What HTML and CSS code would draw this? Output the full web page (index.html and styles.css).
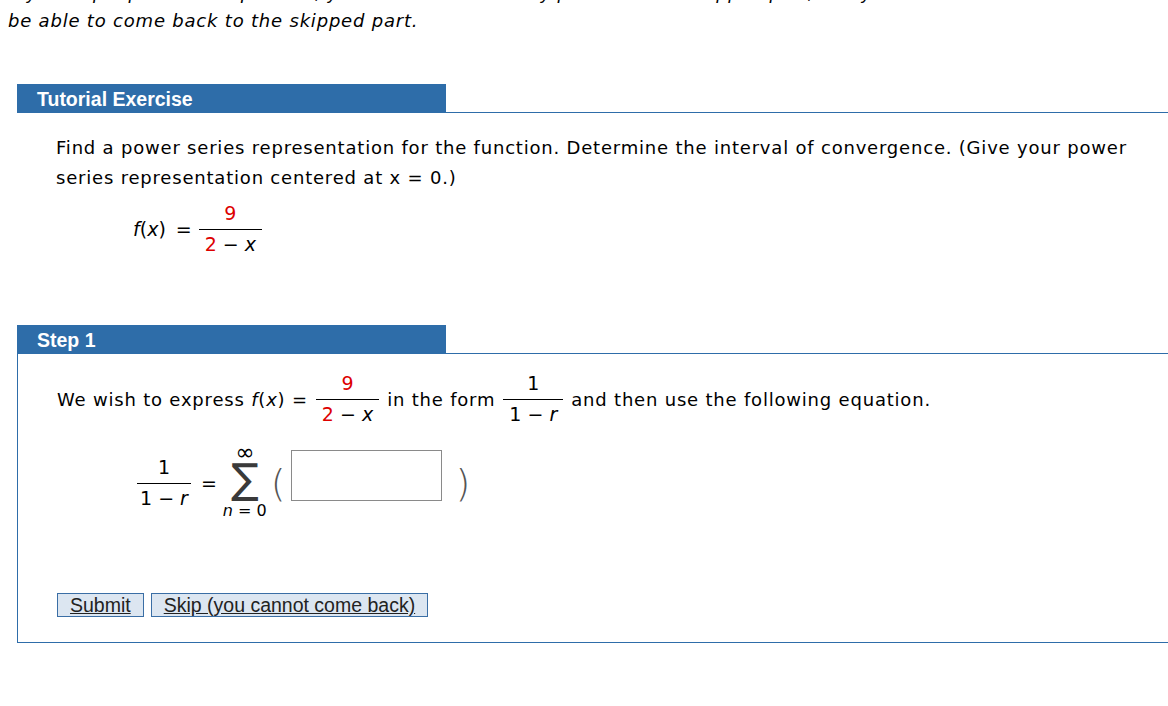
FILE: index.html
```html
<!DOCTYPE html>
<html>
<head>
<meta charset="utf-8">
<link rel="stylesheet" href="styles.css">
</head>
<body>
<div class="intro">
  <p class="clipped">If you skip a part of the question, you will not receive any points for the skipped part, and you will not</p>
  <p>be able to come back to the skipped part.</p>
</div>

<section class="tutorial">
  <div class="tab-row">
    <h2 class="tab">Tutorial Exercise</h2>
    <div class="rule"></div>
  </div>
  <div class="tut-body">
    <p class="question">Find a power series representation for the function. Determine the interval of convergence. (Give your power series representation centered at x = 0.)</p>
    <div class="eq eq-main">
      <span class="lhs"><i>f</i>(<i>x</i>)</span>
      <span class="op">=</span>
      <span class="frac wide">
        <span class="num red">9</span>
        <span class="den"><span class="red">2</span> − <i>x</i></span>
      </span>
    </div>
  </div>
</section>

<section class="step">
  <div class="tab-row">
    <h2 class="tab">Step 1</h2>
    <div class="rule"></div>
  </div>
  <div class="step-body">
    <div class="eq-line">
      <span class="txt">We wish to express <i>f</i>(<i>x</i>) =</span>
      <span class="frac wide">
        <span class="num red">9</span>
        <span class="den"><span class="red">2</span> − <i>x</i></span>
      </span>
      <span class="txt">in the form</span>
      <span class="frac wide">
        <span class="num">1</span>
        <span class="den">1 − <i>r</i></span>
      </span>
      <span class="txt">and then use the following equation.</span>
    </div>

    <div class="eq eq-sum">
      <span class="frac">
        <span class="num">1</span>
        <span class="den">1 − <i>r</i></span>
      </span>
      <span class="op">=</span>
      <span class="sigma">
        <span class="lim top">∞</span>
        <span class="sym">∑</span>
        <span class="lim bottom"><i>n</i> = 0</span>
      </span>
      <span class="paren">(</span>
      <input class="answer" type="text">
      <span class="paren">)</span>
    </div>

    <div class="buttons">
      <button class="btn">Submit</button>
      <button class="btn">Skip (you cannot come back)</button>
    </div>
  </div>
</section>
</body>
</html>
```

FILE: styles.css
```css
html, body {
  margin: 0;
  padding: 0;
  background: #ffffff;
}

body {
  font-family: "DejaVu Sans", Verdana, sans-serif;
  font-size: 18px;
  letter-spacing: 0.8px;
  color: #000000;
  width: 1168px;
  overflow: hidden;
}

p {
  margin: 0;
}

.intro {
  padding-left: 8px;
  font-style: italic;
  line-height: 28px;
  margin-top: -21px;
  white-space: nowrap;
  overflow: hidden;
}

.clipped {
  letter-spacing: 0.4px;
}

.tutorial {
  margin-top: 49px;
  margin-left: 17px;
}

.tab-row {
  display: flex;
  align-items: flex-end;
}

.tab {
  margin: 0;
  width: 429px;
  height: 29px;
  box-sizing: border-box;
  padding-left: 20px;
  background: #2e6da9;
  color: #ffffff;
  font-family: "Liberation Sans", Arial, sans-serif;
  font-weight: bold;
  font-size: 19.5px;
  letter-spacing: 0;
  line-height: 30px;
}

.rule {
  flex: 1;
  border-bottom: 1px solid #2e6da9;
}

.tut-body {
  padding: 20px 0 0 39px;
}

.question {
  line-height: 30px;
  padding-right: 20px;
}

.red {
  color: #dd0000;
}

.eq {
  display: flex;
  align-items: center;
  letter-spacing: 0;
  font-size: 19px;
}

.eq-main {
  margin-top: 9px;
  margin-left: 77px;
}

.lhs {
  margin-right: 10px;
}

.op {
  margin-right: 7px;
}

.frac {
  display: inline-flex;
  flex-direction: column;
  align-items: center;
  font-size: 19px;
  letter-spacing: 0;
  line-height: 23px;
}

.frac .num {
  align-self: stretch;
  text-align: center;
  border-bottom: 1px solid #000000;
  padding: 0 3px 4px;
}

.frac .den {
  padding: 3px 3px 0;
  white-space: nowrap;
}

.frac.wide .num,
.frac.wide .den {
  padding-left: 6px;
  padding-right: 6px;
}

.step {
  margin-top: 69px;
  margin-left: 17px;
  border-left: 1px solid #2e6da9;
  border-bottom: 1px solid #2e6da9;
}

.step .tab-row {
  margin-left: -1px;
}

.step-body {
  padding: 18px 0 25px 39px;
}

.eq-line {
  display: flex;
  align-items: center;
  gap: 8px;
}

.eq-sum {
  margin-top: 18px;
  margin-left: 80px;
}

.eq-sum .op {
  margin: 0 6px 0 10px;
}

.sigma {
  display: inline-flex;
  flex-direction: column;
  align-items: center;
  font-size: 16px;
  margin-right: 4px;
}

.sigma .lim.top {
  font-size: 23px;
  line-height: 16px;
}

.sigma .lim.bottom {
  line-height: 20px;
}

.sigma .sym {
  font-family: "DejaVu Sans", sans-serif;
  font-size: 41px;
  line-height: 36px;
  margin-top: 1px;
  margin-bottom: 4px;
  color: #3a3a3a;
}

.paren {
  font-family: "DejaVu Sans", sans-serif;
  font-weight: 200;
  font-size: 38px;
  color: #555555;
  line-height: 40px;
}

.answer {
  align-self: flex-start;
  width: 151px;
  height: 51px;
  box-sizing: border-box;
  border: 1px solid #8a8a8a;
  margin: 6px 14px 0 5px;
  padding: 0;
  background: #ffffff;
}

.buttons {
  display: flex;
  gap: 7px;
  margin-top: 72px;
}

.btn {
  font-family: "Liberation Sans", Arial, sans-serif;
  font-size: 19.5px;
  color: #222222;
  text-decoration: underline;
  background: #dce6f1;
  border: 1px solid #3a6ea5;
  height: 24px;
  padding: 0 12px;
  line-height: 22px;
  border-radius: 0;
}
```
